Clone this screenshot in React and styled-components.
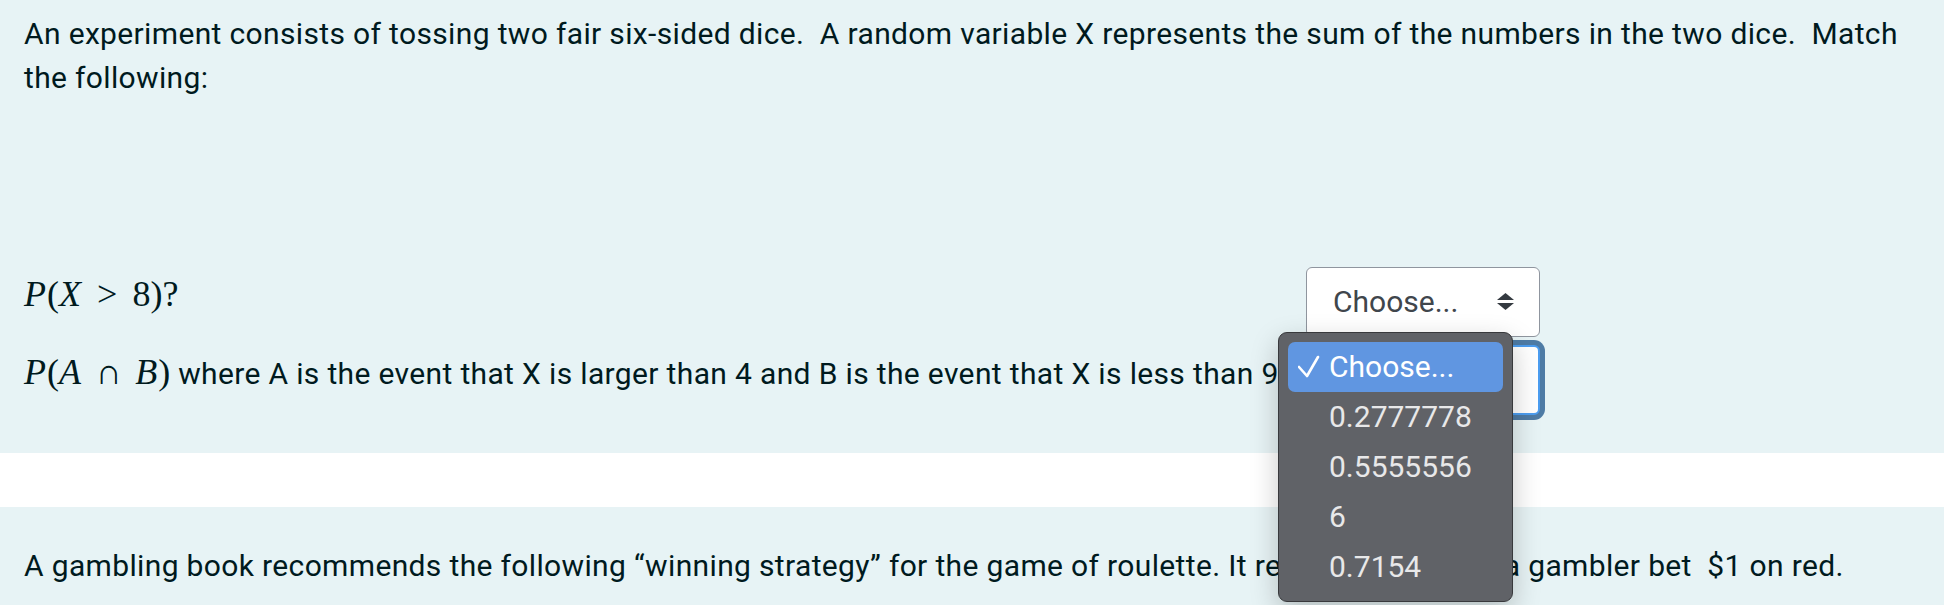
import React from "react";
import styled, { createGlobalStyle } from "styled-components";

const GlobalStyle = createGlobalStyle`
  body {
    margin: 0;
    background: #ffffff;
    font-family: Roboto, "Liberation Sans", Arial, sans-serif;
    color: #001a1e;
  }
`

const Formulation = styled.section`
  background-color: #e7f3f5;
  padding: ${(p) => p.pad};
  font-size: 30px;
  line-height: 44px;
  letter-spacing: 0.35px;
`

const Spacer = styled.div`
  height: 54px;
  background: #ffffff;
`

const QText = styled.p`
  margin: 0;
`

const AnswerTable = styled.div`
  display: grid;
  grid-template-columns: 1250px 234px;
  column-gap: 32px;
  margin-top: 163px;
`

const Label = styled.div`
  height: 78px;
  padding-top: 9px;
  box-sizing: border-box;
  white-space: nowrap;
`

const Control = styled.div`
  position: relative;
  height: 78px;
  display: flex;
  align-items: center;
  letter-spacing: 0;
`

const Math = styled.span`
  font-family: "Liberation Serif", "DejaVu Serif", serif;
  font-size: 36px;
  letter-spacing: 0;
`

const Var = styled.i`
  font-style: italic;
  margin-right: 1px;
`

const Op = styled.span`
  padding: 0 ${(p) => p.space};
`

const Select = styled.div`
  box-sizing: border-box;
  width: 234px;
  height: 70px;
  display: flex;
  align-items: center;
  justify-content: space-between;
  padding: 0 25px 0 26px;
  background: #ffffff;
  border: ${(p) => (p.focused ? "2px solid #4c9df0" : "1px solid #8f959e")};
  border-radius: 6px;
  box-shadow: ${(p) => (p.focused ? "0 0 0 5px #4e7ba5" : "none")};
  color: #40464c;
  font-size: 30px;
`

const Popup = styled.div`
  position: absolute;
  left: -28px;
  top: -9px;
  width: 235px;
  box-sizing: border-box;
  padding: 9px;
  background: #606267;
  border: 1px solid #38393c;
  border-radius: 9px;
  box-shadow: 0 10px 28px rgba(0, 0, 0, 0.22);
  z-index: 2;
`

const Option = styled.div`
  display: flex;
  align-items: center;
  height: 50px;
  padding-left: 10px;
  border-radius: 7px;
  background: ${(p) => (p.active ? "#6096e1" : "transparent")};
  color: ${(p) => (p.active ? "#ffffff" : "#e8e8e9")};
  font-size: 30px;
`

const CheckSlot = styled.span`
  width: 31px;
  flex: none;
  display: flex;
  align-items: center;
`

function Arrows() {
  return (
    <svg width="17" height="18" viewBox="0 0 17 18">
      <polygon points="0,7 8.5,0 17,7" fill="#343a40" />
      <polygon points="0,10 17,10 8.5,17" fill="#343a40" />
    </svg>
  );
}

function Check() {
  return (
    <svg width="22" height="24" viewBox="0 0 22 24">
      <polyline
        points="1,12 9,21 20,2"
        fill="none"
        stroke="#ffffff"
        strokeWidth="2.6"
        strokeLinecap="round"
        strokeLinejoin="round"
      />
    </svg>
  );
}

const options = ["Choose...", "0.2777778", "0.5555556", "6", "0.7154"];

export default function App() {
  return (
    <>
      <GlobalStyle />
      <Formulation pad="12px 24px 34px">
        <QText>
          An experiment consists of tossing two fair six-sided dice.{"\u00a0 "}A random variable X
          represents the sum of the numbers in the two dice.{"\u00a0 "}Match
          <br />
          the following:
        </QText>
        <AnswerTable>
          <Label>
            <Math>
              <Var>P</Var>(<Var>X</Var>
              <Op space="0.42em">&gt;</Op>8)?
            </Math>
          </Label>
          <Control>
            <Select>
              <span>Choose...</span>
              <Arrows />
            </Select>
          </Control>
          <Label>
            <Math>
              <Var>P</Var>(<Var>A</Var>
              <Op space="0.38em">∩</Op>
              <Var>B</Var>)
            </Math>{" "}
            where A is the event that X is larger than 4 and B is the event that X is less than 9.
          </Label>
          <Control>
            <Select focused>
              <span>Choose...</span>
              <Arrows />
            </Select>
            <Popup>
              {options.map((o, i) => (
                <Option key={o} active={i === 0}>
                  <CheckSlot>{i === 0 && <Check />}</CheckSlot>
                  {o}
                </Option>
              ))}
            </Popup>
          </Control>
        </AnswerTable>
      </Formulation>
      <Spacer />
      <Formulation pad="37px 24px 17px">
        <QText>
          A gambling book recommends the following “winning strategy” for the game of roulette. It
          recommends that a gambler bet{"\u00a0 "}$1 on red.
        </QText>
      </Formulation>
    </>
  );
}
